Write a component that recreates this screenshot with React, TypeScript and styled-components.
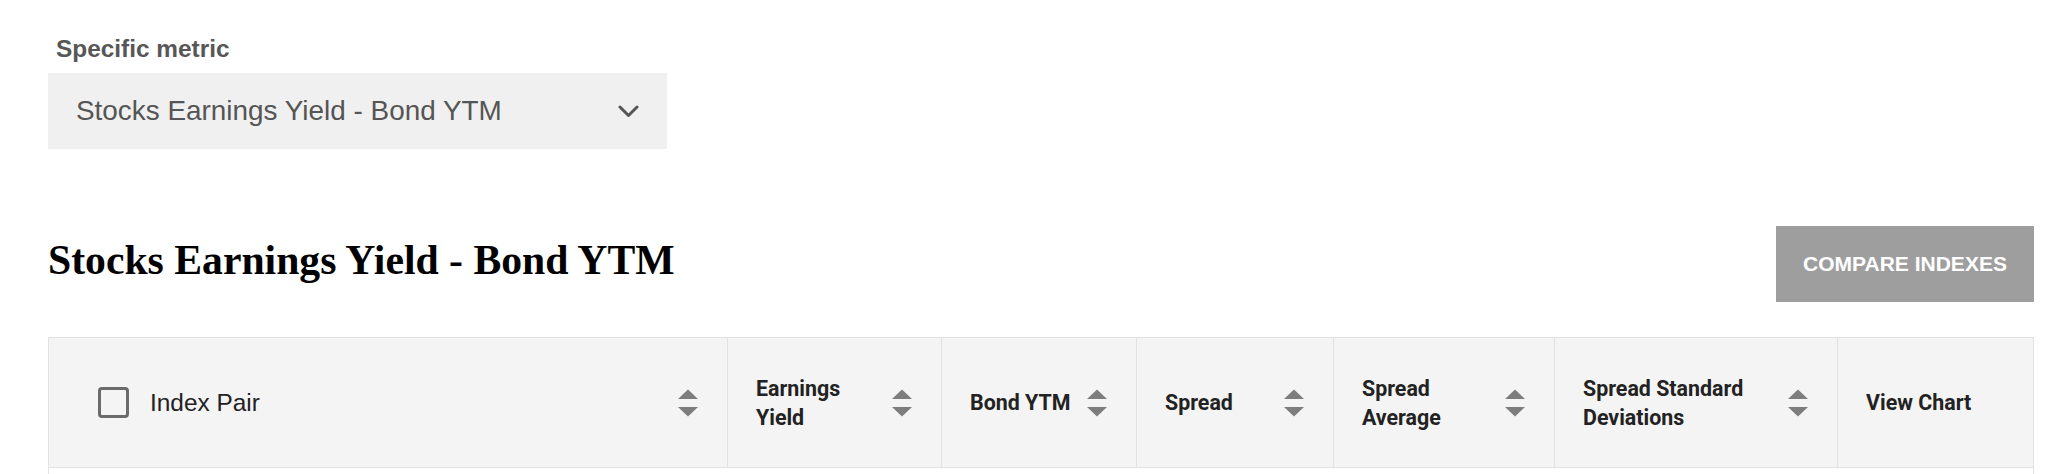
import styled, { createGlobalStyle } from 'styled-components';

const GlobalStyle = createGlobalStyle`
  body {
    margin: 0;
    background: #ffffff;
  }
`;

type Column = {
  label: string;
  width: number;
  sortable: boolean;
};

const columns: Column[] = [
  { label: 'Earnings Yield', width: 214, sortable: true },
  { label: 'Bond YTM', width: 195, sortable: true },
  { label: 'Spread', width: 197, sortable: true },
  { label: 'Spread Average', width: 221, sortable: true },
  { label: 'Spread Standard Deviations', width: 283, sortable: true },
  { label: 'View Chart', width: 196, sortable: false },
];

function SortIcon() {
  return (
    <SortSvg width="20" height="28" viewBox="0 0 20 28" aria-hidden="true">
      <polygon points="10,0.5 20,10 0,10" fill="#7d7d7d" />
      <polygon points="0,18 20,18 10,27.5" fill="#7d7d7d" />
    </SortSvg>
  );
}

function Chevron() {
  return (
    <svg width="21" height="13" viewBox="0 0 21 13" aria-hidden="true">
      <path
        d="M2 2 L10.5 10.5 L19 2"
        fill="none"
        stroke="#555"
        strokeWidth="3"
        strokeLinecap="round"
        strokeLinejoin="round"
      />
    </svg>
  );
}

export default function App() {
  return (
    <Page>
      <GlobalStyle />
      <FieldLabel>Specific metric</FieldLabel>
      <Select role="combobox" aria-label="Specific metric">
        <SelectValue>Stocks Earnings Yield - Bond YTM</SelectValue>
        <Chevron />
      </Select>

      <TitleRow>
        <Title>Stocks Earnings Yield - Bond YTM</Title>
        <CompareButton type="button">COMPARE INDEXES</CompareButton>
      </TitleRow>

      <Table role="table">
        <HeaderRow $columns={[679, ...columns.map(c => c.width)]}>
          <FirstHeaderCell>
            <PairLabel>
              <Checkbox />
              <PairText>Index Pair</PairText>
            </PairLabel>
            <SortIcon />
          </FirstHeaderCell>
          {columns.map(col => (
            <HeaderCell key={col.label}>
              <HeaderText>{col.label}</HeaderText>
              {col.sortable && <SortIcon />}
            </HeaderCell>
          ))}
        </HeaderRow>
        <Body />
      </Table>
    </Page>
  );
}

const Page = styled.main`
  box-sizing: border-box;
  width: 100%;
  padding: 35px 14px 0 48px;
  font-family: 'Liberation Sans', Arial, sans-serif;
`;

const FieldLabel = styled.div`
  font-size: 24.4px;
  line-height: 28px;
  font-weight: 700;
  color: #575757;
  margin-left: 8px;
`;

const Select = styled.div`
  box-sizing: border-box;
  display: flex;
  align-items: center;
  justify-content: space-between;
  width: 619px;
  height: 76px;
  margin-top: 10px;
  padding: 0 28px 0 28px;
  background: #f0f0f0;
`;

const SelectValue = styled.span`
  font-size: 27.9px;
  color: #555555;
`;

const TitleRow = styled.div`
  display: flex;
  align-items: flex-start;
  justify-content: space-between;
  margin-top: 77px;
`;

const Title = styled.h2`
  margin: 0;
  font-family: 'Liberation Serif', 'Times New Roman', serif;
  font-size: 41.7px;
  line-height: 68px;
  font-weight: 700;
  color: #000000;
`;

const CompareButton = styled.button`
  width: 258px;
  height: 76px;
  border: 0;
  background: #9e9e9e;
  color: #ffffff;
  font-family: 'Liberation Sans', Arial, sans-serif;
  font-size: 21px;
  font-weight: 700;
  padding: 0;
`;

const Table = styled.div`
  margin-top: 35px;
  border-top: 1px solid #e2e2e2;
  border-left: 1px solid #e2e2e2;
`;

const HeaderRow = styled.div<{ $columns: number[] }>`
  display: grid;
  grid-template-columns: ${p => p.$columns.map(w => `${w}px`).join(' ')};
  background: #f4f4f4;
`;

const HeaderCell = styled.div`
  box-sizing: border-box;
  display: flex;
  align-items: center;
  justify-content: space-between;
  gap: 12px;
  height: 130px;
  padding: 0 29px 0 28px;
  border-right: 1px solid #e2e2e2;
  border-bottom: 1px solid #e2e2e2;
`;

const FirstHeaderCell = styled(HeaderCell)`
  padding-left: 49px;
`;

const HeaderText = styled.span`
  flex: 1;
  font-family: Roboto, 'Liberation Sans', sans-serif;
  font-size: 21.4px;
  line-height: 29px;
  font-weight: 700;
  color: #222222;
`;

const PairLabel = styled.label`
  display: flex;
  align-items: center;
  gap: 21px;
`;

const Checkbox = styled.span`
  box-sizing: border-box;
  width: 31px;
  height: 31px;
  border: 3px solid #6a6a6a;
  border-radius: 4px;
`;

const PairText = styled.span`
  font-size: 24.4px;
  color: #222222;
`;

const SortSvg = styled.svg`
  flex-shrink: 0;
`;

const Body = styled.div`
  height: 40px;
  border-right: 1px solid #e2e2e2;
  background: #ffffff;
`;
